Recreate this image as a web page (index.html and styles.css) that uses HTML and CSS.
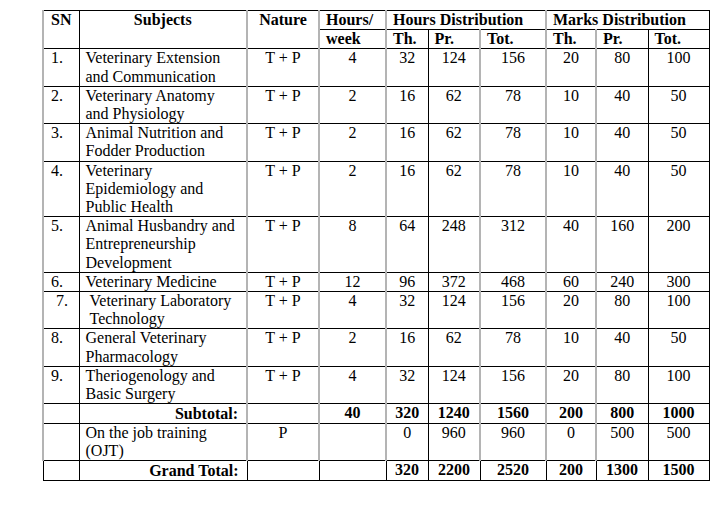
FILE: index.html
```html
<!DOCTYPE html>
<html>
<head>
<meta charset="utf-8">
<link rel="stylesheet" href="styles.css">
</head>
<body>
<table class="course">
  <colgroup>
    <col class="c-sn"><col class="c-subj"><col class="c-nat"><col class="c-hw">
    <col class="c-hth"><col class="c-hpr"><col class="c-htot">
    <col class="c-mth"><col class="c-mpr"><col class="c-mtot">
  </colgroup>
  <thead>
    <tr>
      <th rowspan="2" class="sn g-l k-r">SN</th>
      <th rowspan="2" class="ctr g-r">Subjects</th>
      <th rowspan="2" class="ctr g-r">Nature</th>
      <th class="lft g-r">Hours/</th>
      <th colspan="3" class="lft g-r">Hours Distribution</th>
      <th colspan="3" class="lft k-r">Marks Distribution</th>
    </tr>
    <tr>
      <th class="lft g-r">week</th>
      <th class="lft k-r">Th.</th>
      <th class="lft g-r">Pr.</th>
      <th class="lft g-r">Tot.</th>
      <th class="lft g-r">Th.</th>
      <th class="lft k-r">Pr.</th>
      <th class="lft k-r">Tot.</th>
    </tr>
  </thead>
  <tbody>
    <tr>
      <td class="sn g-l k-r">1.</td><td class="subj g-r">Veterinary Extension and Communication</td><td class="ctr g-r">T + P</td><td class="ctr g-r">4</td>
      <td class="ctr k-r">32</td><td class="ctr g-r">124</td><td class="ctr g-r">156</td><td class="ctr g-r">20</td><td class="ctr k-r">80</td><td class="ctr k-r">100</td>
    </tr>
    <tr>
      <td class="sn g-l k-r">2.</td><td class="subj g-r">Veterinary Anatomy and Physiology</td><td class="ctr g-r">T + P</td><td class="ctr g-r">2</td>
      <td class="ctr k-r">16</td><td class="ctr g-r">62</td><td class="ctr g-r">78</td><td class="ctr g-r">10</td><td class="ctr k-r">40</td><td class="ctr k-r">50</td>
    </tr>
    <tr>
      <td class="sn g-l k-r">3.</td><td class="subj g-r">Animal Nutrition and Fodder Production</td><td class="ctr g-r">T + P</td><td class="ctr g-r">2</td>
      <td class="ctr k-r">16</td><td class="ctr g-r">62</td><td class="ctr g-r">78</td><td class="ctr g-r">10</td><td class="ctr k-r">40</td><td class="ctr k-r">50</td>
    </tr>
    <tr>
      <td class="sn g-l k-r">4.</td><td class="subj g-r">Veterinary<br>Epidemiology and Public Health</td><td class="ctr g-r">T + P</td><td class="ctr g-r">2</td>
      <td class="ctr k-r">16</td><td class="ctr g-r">62</td><td class="ctr g-r">78</td><td class="ctr g-r">10</td><td class="ctr k-r">40</td><td class="ctr k-r">50</td>
    </tr>
    <tr>
      <td class="sn g-l k-r">5.</td><td class="subj g-r">Animal Husbandry and Entrepreneurship Development</td><td class="ctr g-r">T + P</td><td class="ctr g-r">8</td>
      <td class="ctr k-r">64</td><td class="ctr g-r">248</td><td class="ctr g-r">312</td><td class="ctr g-r">40</td><td class="ctr k-r">160</td><td class="ctr k-r">200</td>
    </tr>
    <tr>
      <td class="sn g-l k-r">6.</td><td class="subj g-r">Veterinary Medicine</td><td class="ctr g-r">T + P</td><td class="ctr g-r">12</td>
      <td class="ctr k-r">96</td><td class="ctr g-r">372</td><td class="ctr g-r">468</td><td class="ctr g-r">60</td><td class="ctr k-r">240</td><td class="ctr k-r">300</td>
    </tr>
    <tr class="shifted">
      <td class="sn g-l k-r">7.</td><td class="subj g-r">Veterinary Laboratory Technology</td><td class="ctr g-r">T + P</td><td class="ctr g-r">4</td>
      <td class="ctr k-r">32</td><td class="ctr g-r">124</td><td class="ctr g-r">156</td><td class="ctr g-r">20</td><td class="ctr k-r">80</td><td class="ctr k-r">100</td>
    </tr>
    <tr>
      <td class="sn g-l k-r">8.</td><td class="subj g-r">General Veterinary Pharmacology</td><td class="ctr g-r">T + P</td><td class="ctr g-r">2</td>
      <td class="ctr k-r">16</td><td class="ctr g-r">62</td><td class="ctr g-r">78</td><td class="ctr g-r">10</td><td class="ctr k-r">40</td><td class="ctr k-r">50</td>
    </tr>
    <tr>
      <td class="sn g-l k-r">9.</td><td class="subj g-r">Theriogenology and Basic Surgery</td><td class="ctr g-r">T + P</td><td class="ctr g-r">4</td>
      <td class="ctr k-r">32</td><td class="ctr g-r">124</td><td class="ctr g-r">156</td><td class="ctr g-r">20</td><td class="ctr k-r">80</td><td class="ctr k-r">100</td>
    </tr>
    <tr class="total">
      <td class="sn g-l k-r"></td><td class="rgt g-r">Subtotal:</td><td class="ctr g-r"></td><td class="ctr g-r">40</td>
      <td class="ctr k-r">320</td><td class="ctr g-r">1240</td><td class="ctr g-r">1560</td><td class="ctr g-r">200</td><td class="ctr k-r">800</td><td class="ctr k-r">1000</td>
    </tr>
    <tr>
      <td class="sn g-l k-r"></td><td class="subj g-r">On the job training (OJT)</td><td class="ctr g-r">P</td><td class="ctr g-r"></td>
      <td class="ctr k-r">0</td><td class="ctr g-r">960</td><td class="ctr g-r">960</td><td class="ctr g-r">0</td><td class="ctr k-r">500</td><td class="ctr k-r">500</td>
    </tr>
    <tr class="total grand">
      <td class="sn"></td><td class="rgt">Grand Total:</td><td class="ctr"></td><td class="ctr"></td>
      <td class="ctr">320</td><td class="ctr">2200</td><td class="ctr">2520</td><td class="ctr">200</td><td class="ctr">1300</td><td class="ctr">1500</td>
    </tr>
  </tbody>
</table>
</body>
</html>
```

FILE: styles.css
```css
html, body {
  margin: 0;
  padding: 0;
  background: #ffffff;
}

body {
  padding: 10px 0 0 42px;
  font-family: "Liberation Serif", "Times New Roman", serif;
  font-size: 16px;
  line-height: 18.2px;
  color: #000;
}

.course {
  border-collapse: collapse;
  table-layout: fixed;
  width: 666px;
}

.c-sn { width: 36px; }
.c-subj { width: 168px; }
.c-nat { width: 72px; }
.c-hw { width: 67px; }
.c-hth { width: 42px; }
.c-hpr { width: 52px; }
.c-htot { width: 66px; }
.c-mth { width: 50px; }
.c-mpr { width: 52px; }
.c-mtot { width: 61px; }

.course th,
.course td {
  border: 1px solid #000;
  padding: 0 6px 0 6px;
  vertical-align: top;
  white-space: normal;
}

.course th {
  font-weight: bold;
}

.course th.ctr,
.course td.ctr {
  text-align: center;
  padding: 0 2px;
}

.lft { text-align: left; }
.rgt { text-align: right; padding-right: 8px !important; }

.sn { padding-left: 7px !important; text-align: left; }
.subj { text-align: left; padding-left: 7px; }

.g-l { border-left: 2px solid #b4b4b4 !important; }
.g-r { border-right: 2px solid #b4b4b4 !important; }
.k-r { border-right: 1px solid #000 !important; }

.shifted .sn { padding-left: 12px !important; }
.shifted .subj { padding-left: 10px; }

.total td {
  font-weight: bold;
  padding-top: 0.5px;
}

.grand td {
  border: 1px solid #000 !important;
}
```
